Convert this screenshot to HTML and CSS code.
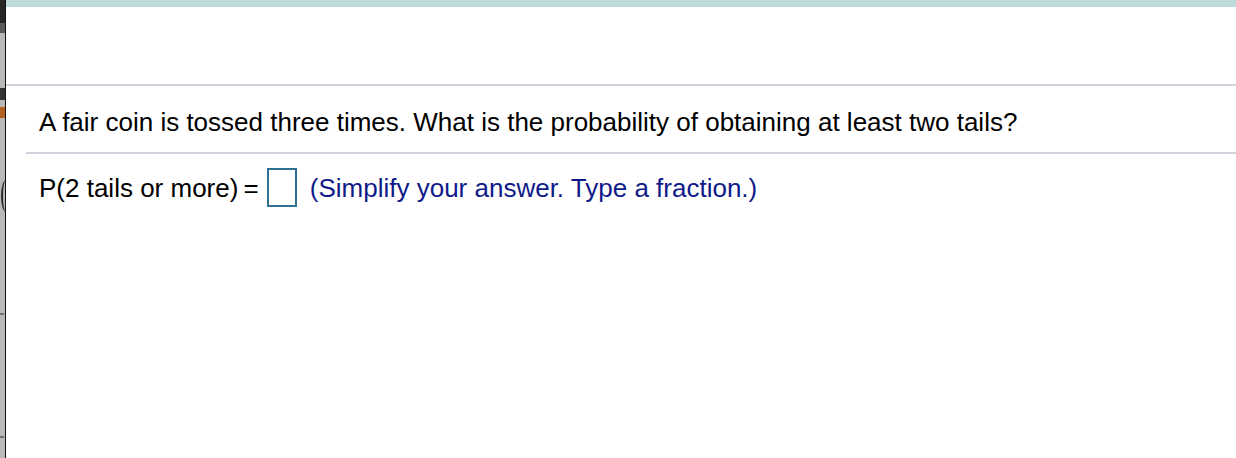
FILE: index.html
```html
<!DOCTYPE html>
<html>
<head>
<meta charset="utf-8">
<link rel="stylesheet" href="styles.css">
</head>
<body>
<div class="frame">
  <div class="side">
    <div class="side-dark"></div>
    <div class="side-mid"></div>
    <div class="side-gap"></div>
    <div class="side-tab"></div>
    <div class="side-gap2"></div>
    <div class="side-orange"></div>
    <div class="side-arc"></div>
    <div class="side-tick t1"></div>
    <div class="side-tick t2"></div>
  </div>
  <div class="main">
    <div class="topbar"></div>
    <div class="header"></div>
    <div class="question">
      <p class="qtext">A fair coin is tossed three times. What is the probability of obtaining at least two tails?</p>
    </div>
    <div class="answer">
      <span class="label">P(2 tails or more)&thinsp;=</span>
      <span class="box"></span>
      <span class="hint">(Simplify your answer. Type a fraction.)</span>
    </div>
  </div>
</div>
</body>
</html>
```
FILE: styles.css
```css
html, body {
  margin: 0;
  padding: 0;
  background: #ffffff;
}
.frame {
  display: flex;
  height: 458px;
  overflow: hidden;
}
.side {
  position: relative;
  width: 5px;
  flex: none;
  background: #b9b9b9;
  border-right: 1px solid #111111;
}
.side-dark { height: 23px; background: #262626; }
.side-mid { height: 10px; background: #5a5a5a; }
.side-gap { height: 55px; }
.side-tab { height: 12px; background: #333333; }
.side-gap2 { height: 7px; }
.side-orange { height: 11px; background: #b4601e; }
.side-arc {
  position: absolute;
  left: 1px;
  top: 180px;
  width: 10px;
  height: 32px;
  border-left: 2px solid #2a2a2a;
  border-radius: 50%;
  box-sizing: border-box;
}
.side-tick {
  position: absolute;
  left: 0;
  width: 4px;
  height: 2px;
  background: #707070;
}
.t1 { top: 313px; }
.t2 { top: 436px; }
.main {
  flex: 1;
  font-family: "Liberation Sans", Arial, sans-serif;
  color: #000000;
}
.topbar {
  height: 7px;
  background: #bfdbd9;
}
.header {
  height: 77px;
  border-bottom: 2px solid #d3d3de;
}
.question {
  margin-left: 20px;
  height: 68px;
  border-bottom: 2px solid #d3d3de;
  padding-left: 13px;
  box-sizing: border-box;
}
.qtext {
  margin: 0;
  padding-top: 21px;
  font-size: 26px;
  line-height: 30px;
}
.answer {
  display: flex;
  align-items: center;
  padding-left: 33px;
  padding-top: 14px;
  font-size: 26px;
  line-height: 30px;
}
.box {
  width: 30px;
  height: 39px;
  border: 2px solid #2f7192;
  box-sizing: border-box;
  margin-left: 8px;
  margin-right: 13px;
}
.hint {
  color: #0f1a8a;
}
```
